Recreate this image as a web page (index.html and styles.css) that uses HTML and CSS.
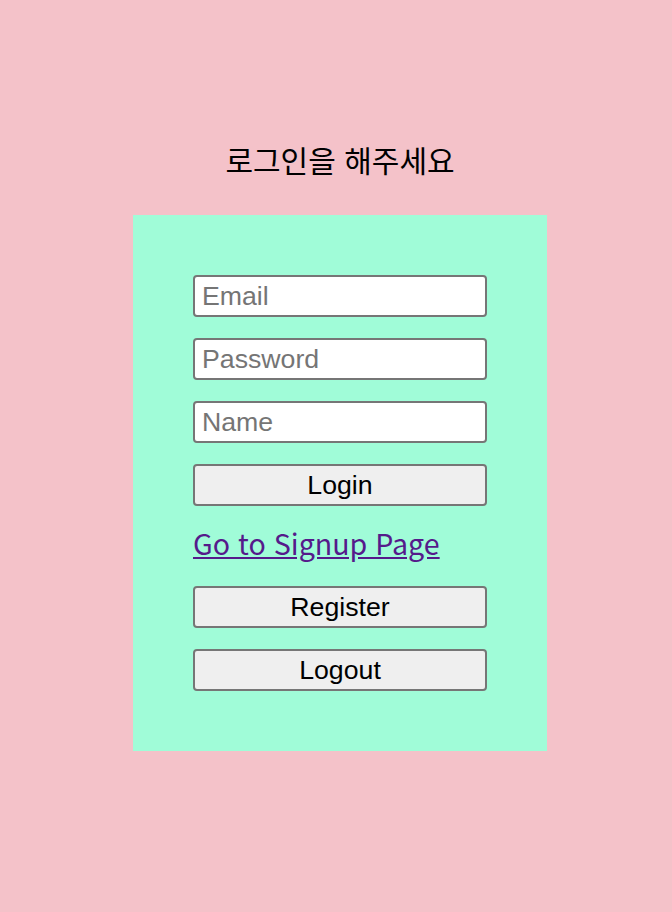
FILE: index.html
```html
<!doctype html>
<html lang="ko">
<head>
    <meta charset="UTF-8">
    <meta name="viewport" content="width=device-width, initial-scale=1.0">
    <title>Login</title>
    <link rel="stylesheet" href="styles.css">
</head>
<body>
<div class="page">
    <h1 class="title">로그인을 해주세요</h1>
    <div class="login-box">
        <input class="field" type="text" placeholder="Email">
        <input class="field" type="password" placeholder="Password">
        <input class="field" type="text" placeholder="Name">
        <button class="btn">Login</button>
        <a class="signup-link" href="#">Go to Signup Page</a>
        <button class="btn">Register</button>
        <button class="btn">Logout</button>
    </div>
</div>
</body>
</html>
```

FILE: styles.css
```css
body {
    margin: 0;
    background-color: #f4c2c9;
    font-family: "Liberation Sans", Arial, sans-serif;
}
.page {
    display: flex;
    flex-direction: column;
    align-items: center;
    padding-left: 8px;
    padding-top: 139px;
}
.title {
    margin: 0 0 36px;
    font-family: "Noto Sans CJK KR", sans-serif;
    font-size: 30px;
    font-weight: 400;
    line-height: 40px;
    color: #000;
}
.login-box {
    display: flex;
    flex-direction: column;
    width: 294px;
    padding: 60px;
    gap: 21px;
    background-color: #a0fcd8;
}
.field,
.btn {
    box-sizing: border-box;
    height: 42px;
    width: 100%;
    margin: 0;
    border: 2px solid #767676;
    border-radius: 4px;
    font-family: "Liberation Sans", Arial, sans-serif;
    font-size: 26.7px;
}
.field {
    padding: 0 7px;
    background-color: #fff;
}
.field::placeholder {
    color: #757575;
}
.btn {
    background-color: #efefef;
    color: #000;
    padding: 0;
}
.signup-link {
    font-family: "Noto Sans CJK KR", sans-serif;
    font-size: 28.6px;
    line-height: 32px;
    margin-bottom: 6px;
    color: #551a8b;
    align-self: flex-start;
}
```
